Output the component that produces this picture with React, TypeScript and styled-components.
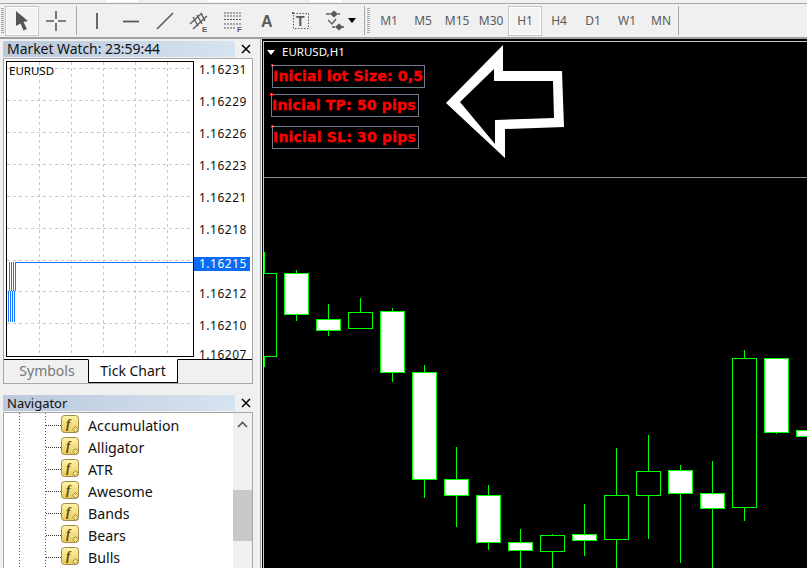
import React from "react";
import styled, { createGlobalStyle } from "styled-components";

const Global = createGlobalStyle`
  html, body { margin: 0; padding: 0; background: #f0f0f0; }
  #root { width: 807px; height: 568px; }
`;
const UI = `"Noto Sans", "DejaVu Sans", sans-serif`;

const Page = styled.div`
  width: 807px; height: 568px; overflow: hidden; display: flex; flex-direction: column;
  background: #f0f0f0; font-family: ${UI}; color: #000;
`;
const TopStrip = styled.div`
  height: 3px; flex: none; display: flex; padding-left: 106px; gap: 70px; box-sizing: content-box;
  border-bottom: 1px solid #a8a8a8;
`;
const StripCell = styled.div<{ $w: number }>`
  width: ${p => p.$w}px; height: 2px; background: #fff;
`;
const Toolbar = styled.div`
  height: 33px; flex: none; display: flex; align-items: center; padding-left: 1px;
  border-bottom: 2px solid #a0a0a0; background: #f0f0f0;
`;
const Grip = styled.div`
  width: 3px; height: 26px; flex: none; margin-right: 1px;
  background: repeating-linear-gradient(#a8a8a8 0 1px, #f0f0f0 1px 2px);
`;
const Sep = styled.div`
  width: 1px; height: 29px; flex: none; background: #a8a8a8;
`;
const ToolGap = styled.div`
  width: 7px; flex: none; display: flex; justify-content: center;
`;
const ToolBtn = styled.div<{ $active?: boolean; $w?: number }>`
  width: ${p => p.$w ?? 34}px; height: 30px; flex: none; display: flex; align-items: center; justify-content: center;
  box-sizing: border-box; color: #555;
  ${p => p.$active ? `
    border: 2px solid #fff; outline: 1px solid #c4c4c4; outline-offset: -1px;
    background: repeating-conic-gradient(#f8f8f8 0 25%, #eee 0 50%) 0 0 / 2px 2px;
  ` : ""}
`;
const TimeBtn = styled(ToolBtn)`
  font-family: "Noto Sans", sans-serif; font-size: 12px; color: #5b5b5b; letter-spacing: -.1px;
`;
const Main = styled.div`
  flex: 1; display: flex; min-height: 0;
`;
const Side = styled.div`
  width: 261px; flex: none; display: flex; flex-direction: column; padding-top: 2px; box-sizing: border-box;
  border-right: 1px solid #a0a0a0;
`;
const TitleBar = styled.div`
  height: 16px; margin: 0 6px 0 3px; display: flex; align-items: center; justify-content: space-between;
  font-size: 14px; line-height: 16px; color: #111; letter-spacing: -.06px;
`;
const TitleText = styled.div`
  width: 232px; height: 16px; padding-left: 4px; box-sizing: border-box;
  background: linear-gradient(90deg, #b9c9da, #d6e3f0);
`;
const Close = styled.div`
  width: 17px; display: flex; justify-content: center; color: #000;
`;
const Market = styled.div`
  height: 326px; flex: none; margin: 1px 7px 0 3px; border: 1px solid #a8a8a8;
  box-sizing: border-box; background: #fff; display: flex; flex-direction: column; position: relative;
`;
const TickArea = styled.div`
  height: 300px; flex: none; display: flex; padding: 2px 0 0 2px; box-sizing: border-box; overflow: hidden;
`;
const Plot = styled.div`
  width: 188px; height: 296px; flex: none; border: 1px solid #000; box-sizing: border-box; position: relative;
`;
const PlotSvg = styled.svg`
  display: block;
`;
const PlotLabel = styled.div`
  position: absolute; left: 2px; top: 1px; font-size: 11.5px; line-height: 15px; color: #000;
`;
const Scale = styled.div`
  flex: 1; display: flex; flex-direction: column; margin-top: -7px; margin-left: -1px;
`;
const Price = styled.div<{ $on?: boolean; $dy?: number }>`
  height: 32px; flex: none; display: flex; align-items: center; font-size: 12px; color: #111; letter-spacing: .5px;
  transform: translateY(${p => p.$dy ?? 0}px);
  span {
    width: 56px; height: 14px; margin-left: 1px; padding-left: 5px; box-sizing: border-box; line-height: 14px;
    ${p => p.$on ? "background: #0a6cf5; color: #fff;" : ""}
  }
`;
const Tabs = styled.div`
  flex: 1; display: flex; background: #f0f0f0; border-top: 1px solid #000;
`;
const Tab = styled.div<{ $on?: boolean }>`
  height: 23px; display: flex; align-items: center; justify-content: center; box-sizing: border-box; font-size: 14px;
  padding-bottom: 2px;
  ${p => p.$on ? `
    width: 90px; background: #fff; color: #111; margin-top: -1px; height: 24px;
    border: 1px solid #000; border-top: 1px solid #fff;
  ` : `width: 84px; padding-left: 2px; color: #777;`}
`;
const NavTitle = styled(TitleBar)`
  margin-top: 11px; font-size: 13px; letter-spacing: 0;
`;
const Nav = styled.div`
  flex: 1; min-height: 0; margin: 1px 7px 0 3px; border: 1px solid #a8a8a8; border-bottom: none; background: #fff;
  display: flex; overflow: hidden; box-sizing: border-box;
`;
const Tree = styled.div`
  flex: 1; position: relative; padding-top: 1px;
  background:
    repeating-linear-gradient(#555 0 1px, transparent 1px 3px) 15px 0 / 1px 100% no-repeat,
    repeating-linear-gradient(#555 0 1px, transparent 1px 3px) 41px 0 / 1px 100% no-repeat;
`;
const Row = styled.div`
  height: 22px; display: flex; align-items: center; padding-left: 42px; font-size: 14.2px; color: #111;
  &::before { content: ""; width: 15px; border-top: 1px dotted #333; flex: none; }
`;
const RowIcon = styled.svg`
  flex: none; margin-right: 7px;
`;
const Scroll = styled.div`
  width: 19px; flex: none; background: #f0f0f0; display: flex; flex-direction: column; align-items: center;
`;
const ScrollUp = styled.div`
  height: 23px; display: flex; align-items: center; color: #555;
`;
const Thumb = styled.div`
  width: 19px; height: 51px; margin-top: 54px; background: #c8c8c8;
`;
const ChartWrap = styled.div`
  flex: 1; min-width: 0; position: relative; background: #000; margin-left: 1px; border-top: 1px solid #000;
`;
const Chart = styled.div`
  position: absolute; inset: 1px 0 0 1px; border-top: 1px solid #c8c8c8; border-left: 1px solid #c8c8c8; background: #000;
  overflow: hidden;
`;
const ChartSvg = styled.svg`
  position: absolute; left: 0; top: 0;
`;
const ChartTitle = styled.div`
  position: absolute; left: 18px; top: 2px; font-size: 11.5px; line-height: 16px; color: #fff;
`;
const Tri = styled.div`
  position: absolute; left: 3px; top: 8px; width: 0; height: 0;
  border-left: 4.5px solid transparent; border-right: 4.5px solid transparent; border-top: 5px solid #fff;
`;
const RedLabel = styled.div<{ $x: number; $y: number; $w: number; $h: number }>`
  position: absolute; left: ${p => p.$x}px; top: ${p => p.$y}px; width: ${p => p.$w}px; height: ${p => p.$h}px;
  box-sizing: border-box; border: 1px solid #6f7c8c; white-space: nowrap;
  font-family: "DejaVu Sans", sans-serif; font-weight: 700; font-size: 14px; line-height: ${p => p.$h - 2}px;
  color: #f00; -webkit-text-stroke: .35px #f00; letter-spacing: .2px;
  &::before {
    content: ""; position: absolute; left: -2px; top: -2px; width: 1px; height: 1px;
    border: 1px solid #f00; background: #fff; -webkit-text-stroke: 0;
  }
`;

const prices = ["1.16231","1.16229","1.16226","1.16223","1.16221","1.16218","1.16215","1.16212","1.16210","1.16207"];
const rows = ["Accumulation","Alligator","ATR","Awesome","Bands","Bears","Bulls"];
const tfs = ["M1","M5","M15","M30","H1","H4","D1","W1","MN"];
type C = [number, number, number, number, number, boolean];
// centre x, wick top, body top, body bottom, wick bottom, filled
const candles: C[] = [
  [264,252,273,356,367,false],[296,270,273,314,321,true],[328,304,319,330,336,true],[360,298,312,328,328,false],
  [392,308,311,372,382,true],[424,365,372,479,498,true],[456,447,479,495,527,true],[488,485,495,542,550,true],
  [520,529,542,550,570,true],[552,534,535,551,570,false],[584,504,534,540,556,true],[616,448,495,539,570,false],
  [648,435,471,495,539,false],[680,465,470,493,563,true],[712,461,493,508,570,true],[744,350,358,507,521,false],
  [776,358,358,432,434,true],[808,428,430,436,438,true],
];

const Icon = ({ w = 24, children }: { w?: number; children: React.ReactNode }) => (
  <svg width={w} height="24" viewBox={`0 0 ${w} 24`} fill="none" stroke="#5a5a5a">{children}</svg>
);
const FnIcon = () => (
  <RowIcon width="20" height="20" viewBox="0 0 20 20">
    <defs>
      <linearGradient id="g" x1="0" y1="0" x2="0" y2="1">
        <stop offset="0" stopColor="#fff3a8" /><stop offset="1" stopColor="#e8cc5c" />
      </linearGradient>
    </defs>
    <rect x=".5" y=".5" width="17" height="17" rx="3" fill="url(#g)" stroke="#a08a50" />
    <text x="5" y="13" fontFamily="Liberation Serif" fontStyle="italic" fontWeight="700" fontSize="13" fill="#5c4a14">f</text>
    <path d="M14.5 11.5 L17.5 14.5 L14.5 17.5 L11.5 14.5Z" fill="#f2dc7c" stroke="#a08a50" />
  </RowIcon>
);

export default function App() {
  return (
    <Page>
      <Global />
      <TopStrip><StripCell $w={32} /><StripCell $w={32} /><StripCell $w={32} /></TopStrip>
      <Toolbar>
        <Grip />
        <ToolBtn $active>
          <svg width="14" height="22" viewBox="0 0 14 22"><path d="M1 1 L13 11 L8.5 12 L12 19 L8.5 20.5 L5.5 13.5 L1 16Z" fill="#555" /></svg>
        </ToolBtn>
        <ToolBtn><Icon><path d="M2 12H10M14 12H22M12 2V10M12 14V22" strokeWidth="1.6" /></Icon></ToolBtn>
        <ToolGap><Sep /></ToolGap>
        <ToolBtn><Icon><path d="M12 4V20" strokeWidth="1.8" /></Icon></ToolBtn>
        <ToolBtn><Icon><path d="M4 12.5H20" strokeWidth="1.8" /></Icon></ToolBtn>
        <ToolBtn><Icon><path d="M4 20L20 4" strokeWidth="1.6" /></Icon></ToolBtn>
        <ToolBtn><Icon>
          <path d="M3 15L15 4M6 20L20 7M6 8L11 17M10 6L15 15M14 4L18 12" strokeWidth="1.4" />
          <text x="15" y="23" fontFamily="Liberation Sans" fontWeight="700" fontSize="8" fill="#5a5a5a" stroke="none">E</text>
        </Icon></ToolBtn>
        <ToolBtn><Icon>
          <path d="M3 4H21M3 7H21M3 10.5H21M3 15H21M3 19H14" strokeWidth="1" strokeDasharray="2 1" />
          <text x="16" y="23" fontFamily="Liberation Sans" fontWeight="700" fontSize="8" fill="#5a5a5a" stroke="none">F</text>
        </Icon></ToolBtn>
        <ToolBtn><Icon>
          <text x="6" y="18" fontFamily="Liberation Sans" fontWeight="700" fontSize="16" fill="#5a5a5a" stroke="none">A</text>
        </Icon></ToolBtn>
        <ToolBtn><Icon>
          <rect x="4.5" y="4.5" width="15" height="15" strokeDasharray="1.5 1.5" />
          <text x="7" y="17" fontFamily="Liberation Sans" fontWeight="700" fontSize="14" fill="#5a5a5a" stroke="none">T</text>
          <rect x="3" y="3" width="2" height="2" fill="#5a5a5a" stroke="none" />
        </Icon></ToolBtn>
        <ToolBtn $w={46}>
          <Icon><path d="M7 5L11 1.5L15 5L11 8.5Z M12 18L16 14.5L20 18L16 21.5Z" fill="#5a5a5a" stroke="none" /><path d="M5 11L9 15L13 10M3 5H7M15 5H17M9 18H12M19 18H21" strokeWidth="1.3" /></Icon>
          <svg width="12" height="8" viewBox="0 0 12 8"><path d="M1 1H9L5 6Z" fill="#000" /></svg>
        </ToolBtn>
        <Sep />
        <ToolGap><Grip /></ToolGap>
        {tfs.map(t => <TimeBtn key={t} $active={t === "H1"}>{t}</TimeBtn>)}
        <Sep />
      </Toolbar>
      <Main>
        <Side>
          <TitleBar>
            <TitleText>Market Watch: 23:59:44</TitleText>
            <Close><svg width="10" height="10" viewBox="0 0 10 10"><path d="M1 1L9 9M9 1L1 9" stroke="#000" strokeWidth="1.5" /></svg></Close>
          </TitleBar>
          <Market>
            <TickArea>
              <Plot>
                <PlotSvg width="186" height="294" viewBox="7 62 186 294">
                  <g stroke="#c8c8c8" strokeDasharray="3 3" fill="none">
                    {[39,71,103,135,167].map(x => <path key={x} d={`M${x}.5 62V357`} />)}
                    {[68,100,132,164,196,228,260,291,323].map(y => <path key={y} d={`M7 ${y}.5H193`} />)}
                  </g>
                  <path d="M15 262.5H193" stroke="#1a78ff" />
                  <path d="M9.5 262V291M11.5 262V291M13.5 262V291M15.5 262V291" stroke="#1a78ff" />
                  <path d="M8.5 291V322M10.5 291V322M12.5 291V322M14.5 291V322" stroke="#1a78ff" />
                </PlotSvg>
                <PlotLabel>EURUSD</PlotLabel>
              </Plot>
              <Scale>
                {prices.map((p, i) => <Price key={p} $on={i === 6} $dy={i === 6 ? 2 : i === 9 ? -3 : 0}><span>{p}</span></Price>)}
              </Scale>
            </TickArea>
            <Tabs>
              <Tab>Symbols</Tab>
              <Tab $on>Tick Chart</Tab>
            </Tabs>
          </Market>
          <NavTitle>
            <TitleText>Navigator</TitleText>
            <Close><svg width="10" height="10" viewBox="0 0 10 10"><path d="M1 1L9 9M9 1L1 9" stroke="#000" strokeWidth="1.5" /></svg></Close>
          </NavTitle>
          <Nav>
            <Tree>
              {rows.map(r => <Row key={r}><FnIcon />{r}</Row>)}
            </Tree>
            <Scroll>
              <ScrollUp><svg width="11" height="7" viewBox="0 0 11 7"><path d="M1 6L5.5 1.5L10 6" fill="none" stroke="#555" strokeWidth="1.6" /></svg></ScrollUp>
              <Thumb />
            </Scroll>
          </Nav>
        </Side>
        <ChartWrap>
          <Chart>
            <ChartSvg width="544" height="526" viewBox="264 42 544 526">
              <path d="M264 177.5H807" stroke="#8a949e" />
              {candles.map(([x, wt, bt, bb, wb, f]) => (
                <g key={x}>
                  <path d={`M${x}.5 ${wt}V${bt}M${x}.5 ${bb}V${wb}`} stroke="#0f0" />
                  <rect x={x - 12 + .5} y={bt + .5} width={24} height={bb - bt} fill={f ? "#fff" : "#000"} stroke="#0f0" />
                </g>
              ))}
              <path fillRule="evenodd" fill="#fff" d="M446 103L503 45L503 71L562 71L564 127L505 129L505 158Z M460 102L495 144L495 120L554 118L553 81L494 81L494 69Z" />
            </ChartSvg>
            <Tri />
            <ChartTitle>EURUSD,H1</ChartTitle>
            <RedLabel $x={8} $y={23} $w={153} $h={23}>Inicial lot Size: 0,5</RedLabel>
            <RedLabel $x={7} $y={52} $w={148} $h={23}>Inicial TP: 50 pips</RedLabel>
            <RedLabel $x={8} $y={84} $w={147} $h={23}>Inicial SL: 30 pips</RedLabel>
          </Chart>
        </ChartWrap>
      </Main>
    </Page>
  );
}
